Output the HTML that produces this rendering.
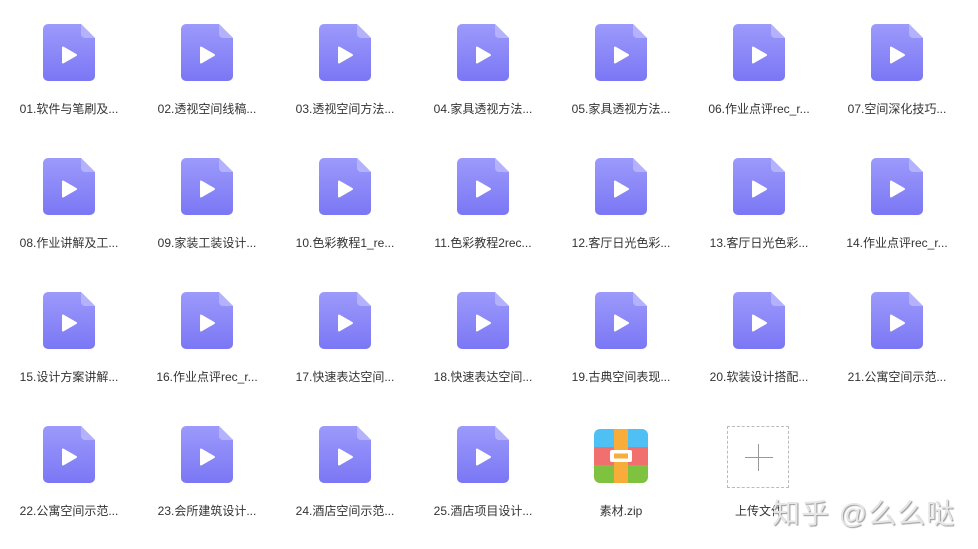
<!DOCTYPE html>
<html><head><meta charset="utf-8"><style>
body{margin:0;width:978px;height:549px;background:#fff;position:relative;overflow:hidden;font-family:"Liberation Sans","Noto Sans CJK SC",sans-serif}
.it{position:absolute;width:138px;text-align:center}
.ic{position:absolute;left:43px;top:0;width:52px;height:57px}
.t{position:absolute;left:0;width:138px;top:77px;font-size:12px;color:#333;line-height:16px;white-space:nowrap}
.wm{position:absolute;left:772px;top:492px;font-size:28px;color:#e6e6e6;text-shadow:1px 1px 1px #999;letter-spacing:1px;white-space:nowrap}
</style></head><body>
<svg width="0" height="0" style="position:absolute"><defs><linearGradient id="g" x1="0" y1="0" x2="0" y2="1"><stop offset="0" stop-color="#9c9afb"/><stop offset="1" stop-color="#7b77f5"/></linearGradient></defs></svg>
<div id="c"></div>
<script>
var n=["01.软件与笔刷及...","02.透视空间线稿...","03.透视空间方法...","04.家具透视方法...","05.家具透视方法...","06.作业点评rec_r...","07.空间深化技巧...","08.作业讲解及工...","09.家装工装设计...","10.色彩教程1_re...","11.色彩教程2rec...","12.客厅日光色彩...","13.客厅日光色彩...","14.作业点评rec_r...","15.设计方案讲解...","16.作业点评rec_r...","17.快速表达空间...","18.快速表达空间...","19.古典空间表现...","20.软装设计搭配...","21.公寓空间示范...","22.公寓空间示范...","23.会所建筑设计...","24.酒店空间示范...","25.酒店项目设计..."];
var h="";
n.forEach(function(s,i){var x=138*(i%7),y=24+134*Math.floor(i/7);
h+='<div class="it" style="left:'+x+'px;top:'+y+'px"><svg class="ic" viewBox="0 0 52 57"><path d="M5 0H38L52 14V52A5 5 0 0 1 47 57H5A5 5 0 0 1 0 52V5A5 5 0 0 1 5 0Z" fill="url(#g)"/><path d="M38 0V10A4 4 0 0 0 42 14H52Z" fill="#b4b2fc"/><path d="M20 23.5L33 31L20 38.5Z" fill="#fff" stroke="#fff" stroke-width="2" stroke-linejoin="round"/></svg><div class="t">'+s+'</div></div>';});
document.getElementById('c').innerHTML=h;
</script>
<div class="it" style="left:552px;top:426px">
<svg style="position:absolute;left:42px;top:3px" width="54" height="54" viewBox="0 0 54 54"><defs><clipPath id="r"><rect width="54" height="54" rx="6"/></clipPath></defs><g clip-path="url(#r)"><rect width="54" height="18" fill="#4fc0f3"/><rect y="18" width="54" height="18" fill="#f26f6f"/><rect y="36" width="54" height="18" fill="#7ec23f"/><rect x="20" width="14" height="54" fill="#f8ad3a"/><rect x="16" y="21" width="22" height="12" rx="2" fill="#fff"/><rect x="20" y="24.5" width="14" height="5" fill="#f8ad3a"/></g></svg>
<div class="t">素材.zip</div></div>
<div class="it" style="left:690px;top:426px">
<div style="position:absolute;left:37px;top:0;width:62px;height:62px;border:1px dashed #bbb;box-sizing:border-box"></div>
<div style="position:absolute;left:55px;top:31px;width:28px;height:1px;background:#999"></div>
<div style="position:absolute;left:68px;top:18px;width:1px;height:27px;background:#999"></div>
<div class="t">上传文件</div></div>
<div class="wm">知乎 @么么哒</div>
</body></html>
